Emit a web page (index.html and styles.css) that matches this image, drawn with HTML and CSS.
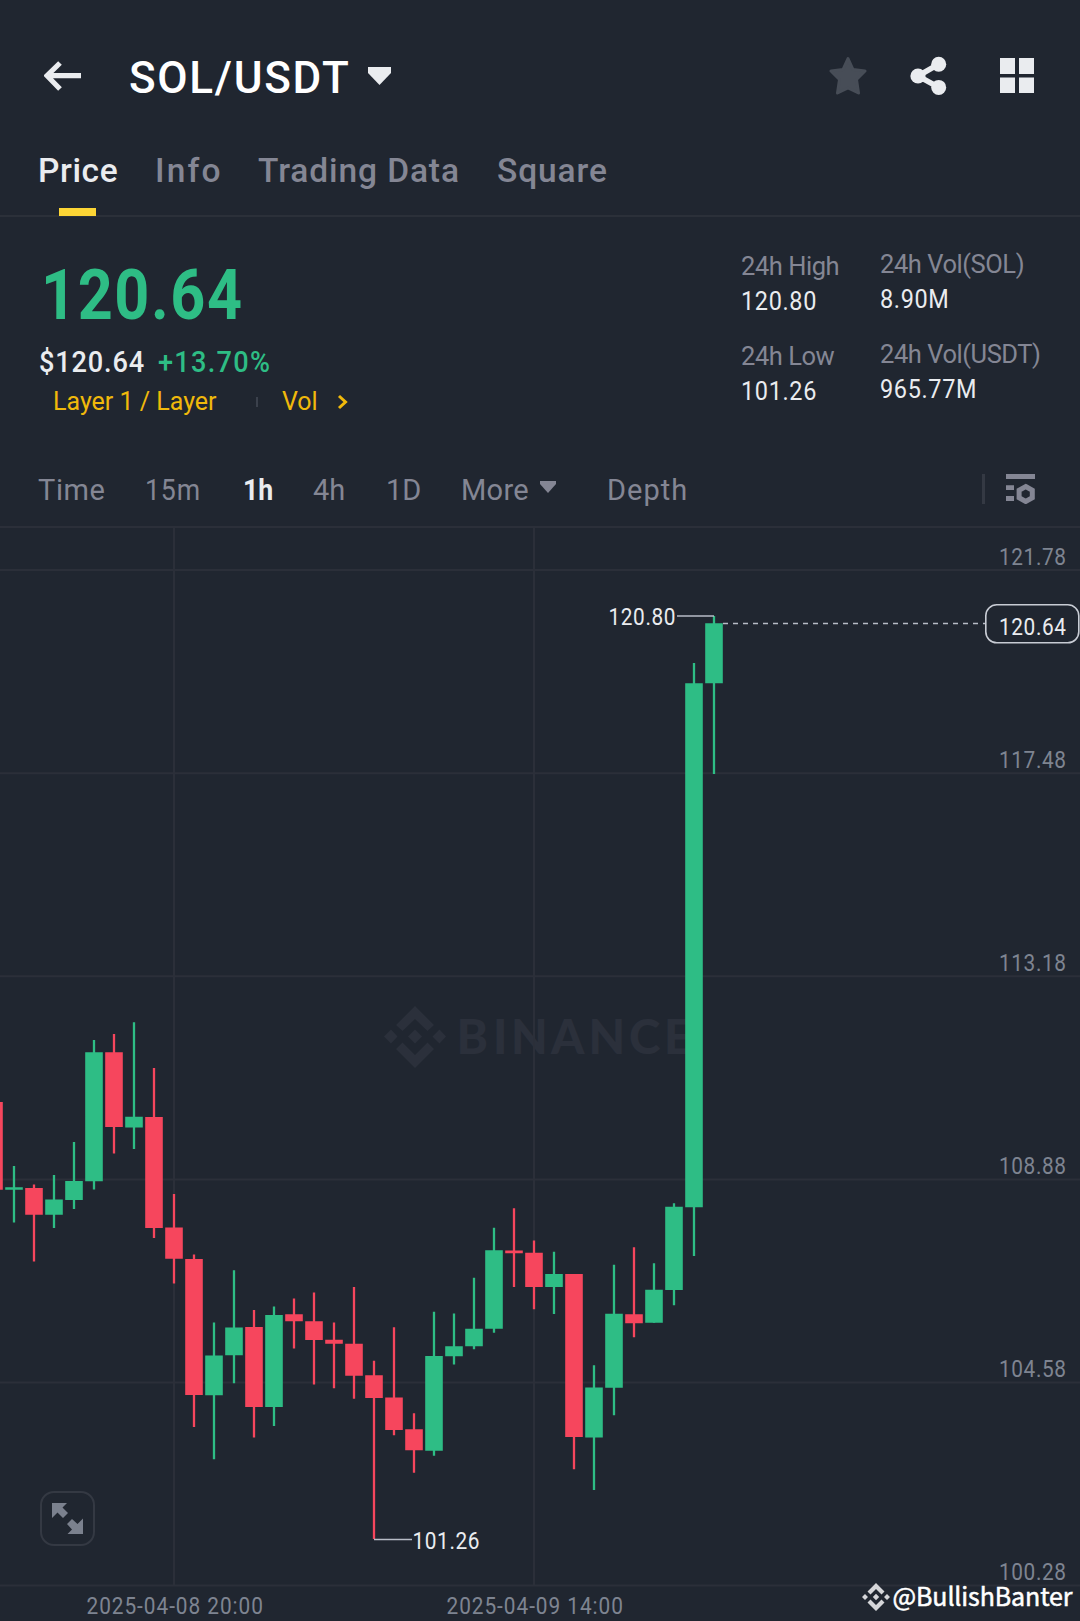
FILE: index.html
```html
<!DOCTYPE html>
<html lang="en">
<head>
<meta charset="utf-8">
<title>SOL/USDT</title>
<link rel="stylesheet" href="styles.css">
</head>
<body>
<header class="header">
  <svg class="back" width="37" height="30" viewBox="0 0 37 30"><path d="M37 14.7H6M16 2L3 14.7L16 28" fill="none" stroke="#eaecef" stroke-width="5.2"/></svg>
  <h1 class="title">SOL/USDT</h1>
  <svg class="caret" width="23" height="18" viewBox="0 0 23 18"><path d="M0 0H23V6L11.5 18L0 6Z" fill="#eaecef"/></svg>
  <div class="actions">
    <svg width="38" height="40" viewBox="0 0 38 40"><path d="M19 2.5L24 13.5L36 15L27.500 23.500L29.500 37L19 32L8.500 37L10.500 23.500L2 15L14 13.500Z" fill="#474d57" stroke="#474d57" stroke-width="3" stroke-linejoin="round"/></svg>
    <svg width="37" height="40" viewBox="0 0 37 40"><g fill="#eaecef"><circle cx="8" cy="20" r="7.600"/><circle cx="28.700" cy="8.200" r="7.500"/><circle cx="28.700" cy="31.400" r="7.500"/></g><path d="M28.700 8.200L8 20L28.700 31.400" fill="none" stroke="#eaecef" stroke-width="5.500"/></svg>
    <svg width="34" height="36" viewBox="0 0 34 36"><path d="M0 0H15V16H0ZM19 0H34V16H19ZM0 19.500H15V35H0ZM19 19.500H34V35H19Z" fill="#eaecef"/></svg>
  </div>
</header>

<nav class="tabs">
  <a class="tab active t-price">Price</a>
  <a class="tab t-info">Info</a>
  <a class="tab t-data">Trading Data</a>
  <a class="tab t-square">Square</a>
</nav>

<section class="summary">
  <div class="quote">
    <div class="last">120.64</div>
    <div class="change"><span class="fiat">$120.64</span><span class="up">+13.70%</span></div>
    <div class="tags"><span class="layer">Layer 1 / Layer</span><i class="tick"></i><span class="vol">Vol</span>
      <svg width="11" height="16" viewBox="0 0 11 16"><path d="M2 2L8.500 8L2 14" fill="none" stroke="#f0b90b" stroke-width="3"/></svg>
    </div>
  </div>
  <div class="stats">
    <div class="stat"><span class="label">24h High</span><span class="value">120.80</span></div>
    <div class="stat"><span class="label">24h Low</span><span class="value">101.26</span></div>
  </div>
  <div class="stats volumes">
    <div class="stat"><span class="label">24h Vol(SOL)</span><span class="value">8.90M</span></div>
    <div class="stat"><span class="label">24h Vol(USDT)</span><span class="value">965.77M</span></div>
  </div>
</section>

<nav class="intervals">
  <a class="i-time">Time</a>
  <a class="i-15m">15m</a>
  <a class="i-1h active">1h</a>
  <a class="i-4h">4h</a>
  <a class="i-1d">1D</a>
  <a class="i-more">More</a>
  <svg class="more-caret" width="16" height="12" viewBox="0 0 16 12"><path d="M0 0H16V3L8 12L0 3Z" fill="#848694"/></svg>
  <a class="i-depth">Depth</a>
  <span class="settings">
    <svg width="30" height="30" viewBox="0 0 30 30"><path d="M0 0H29V5H0ZM0 11.300H8V16H0ZM0 22H8V27H0Z" fill="#848694"/><path d="M19.700 12.500L26.300 16.200V23.800L19.700 27.500L13.100 23.800V16.200Z" fill="none" stroke="#848694" stroke-width="5"/></svg>
  </span>
</nav>

<main class="chart">
<svg width="1080" height="1093" viewBox="0 528 1080 1093">
  <g class="brand">
    <path d="M415 1006L434 1025L427.500 1031L415 1019L402.500 1031L396 1025ZM415 1068L434 1049L427.500 1042.500L415 1055L402.500 1042.500L396 1049ZM415 1029.500L422 1036.500L415 1043.500L408 1036.500ZM391 1029.500L397.500 1036.500L391 1043.500L384 1036.500ZM439.500 1029.500L446 1036.500L439.500 1043.500L432.500 1036.500Z"/>
    <text x="456.500 493 511 551 588.500 629 664" y="1053.500">BINANCE</text>
  </g>
  <path class="grid" d="M0 570H1080M0 773.200H1080M0 976.300H1080M0 1179.400H1080M0 1382.500H1080M0 1585.600H1080M174 528V1585M534 528V1585"/>

  <path class="wick green" d="M14 1166V1222.500M54 1175V1228M74 1142V1209M94 1040V1189.500M134 1022.300V1149M214 1322.500V1459.300M234 1270.300V1383.300M274 1306.500V1426M434 1311.700V1455.700M454 1313.500V1364.500M474 1277.700V1349.300M494 1227.700V1332.700M554 1251.700V1314M594 1365.300V1490M614 1264.700V1415.300M654 1263.300V1322.800M674 1203.300V1305.300M694 663V1256M714 616V774"/>
  <path class="body green" d="M14 1187.300V1189.700M54 1199.500V1214.700M74 1181V1200M94 1052.300V1181.300M134 1116.700V1127.500M214 1355.500V1395.300M234 1327.500V1355.300M274 1315V1407M434 1356V1450.700M454 1346.300V1356.300M474 1328.700V1346.300M494 1250.300V1328.700M554 1274V1287M594 1387.500V1437.500M614 1313.700V1387.700M654 1289.700V1322.800M674 1206.700V1290M694 683.300V1207.300M714 623.300V683.300"/>
  <path class="wick red" d="M34 1184.500V1261.500M114 1034V1153.500M154 1068V1238M174 1194V1283.500M194 1254.500V1427M254 1310V1437.500M294 1298.500V1348.500M314 1292.500V1384.500M334 1322.500V1388.300M354 1287V1398.700M374 1360.700V1539M394 1327.300V1435.300M414 1413.300V1472.700M514 1208.300V1287M534 1240.500V1309.300M574 1274V1469.300M634 1247.300V1337.300"/>
  <path class="body red" d="M-6 1102V1189.700M34 1188V1214.700M114 1052.300V1127M154 1117V1228M174 1227.500V1258.700M194 1259V1395M254 1327V1407M294 1314.300V1321.300M314 1321.300V1340M334 1339.700V1343.700M354 1343.700V1375.700M374 1375.300V1398M394 1397.500V1430M414 1429.300V1450.300M514 1250.500V1253.200M534 1252.700V1287M574 1274V1437M634 1314.300V1323.300"/>

  <path class="leader" d="M677 616H714M374 1539.500H412"/>
  <path class="leader" d="M723 623.500H985" stroke-dasharray="5 5"/>
  <rect x="985.800" y="604.800" width="93" height="38" rx="11" fill="#202630" stroke="#c8ccd4" stroke-width="1.600"/>

  <g class="bright">
    <text x="608.500" y="625" textLength="74">120.80</text>
    <text x="412.500" y="1548.700" textLength="74">101.26</text>
    <text x="999" y="635" textLength="74">120.64</text>
  </g>
  <g class="axis">
    <text x="999" y="564.700" textLength="74">121.78</text>
    <text x="999" y="768" textLength="74">117.48</text>
    <text x="999" y="971.500" textLength="74">113.18</text>
    <text x="999" y="1174.500" textLength="74">108.88</text>
    <text x="999" y="1377.500" textLength="74">104.58</text>
    <text x="999" y="1580.500" textLength="74">100.28</text>
    <text x="86.500" y="1613.700" textLength="195">2025-04-08 20:00</text>
    <text x="446.500" y="1613.700" textLength="195">2025-04-09 14:00</text>
  </g>

  <g class="expand">
    <rect x="41" y="1492" width="53" height="53" rx="13" fill="none" stroke="#343943" stroke-width="2"/>
    <path d="M52 1503H67L62.500 1507.500L68 1513L63 1518L57.500 1512.500L52 1518ZM83 1534H67.500L72 1529.500L67 1524L72 1519L77.500 1524L83 1518.500Z" fill="#7b818e"/>
  </g>

  <g class="credit">
    <path d="M876 1583L884.500 1591.500L881.500 1594.500L876 1589L870.500 1594.500L867.500 1591.500ZM876 1611L884.500 1602.500L881.500 1599.500L876 1605L870.500 1599.500L867.500 1602.500ZM876 1593.800L879.200 1597L876 1600.200L872.800 1597ZM865 1594L868 1597L865 1600L862 1597ZM887 1594L890 1597L887 1600L884 1597Z" fill="#d5d6d9"/>
    <text x="892.500" y="1605.500" textLength="180">@BullishBanter</text>
  </g>
</svg>
</main>
</body>
</html>
```
FILE: styles.css
```css
* { box-sizing: border-box; }
body {
  margin: 0;
  width: 1080px;
  background: #202630;
  color: #848694;
  font-family: Roboto, "Liberation Sans", sans-serif;
}
svg { display: block; flex: none; }

.header {
  display: flex;
  align-items: center;
  height: 152px;
  padding: 0 46px 0 44px;
}
.title {
  margin: 4px 0 0 48px;
  width: 221px;
  font-size: 44px;
  font-weight: 500;
  line-height: 50px;
  letter-spacing: 1.7px;
  color: #fff;
}
.caret { margin-left: 18px; margin-bottom: 1px; }
.actions {
  display: flex;
  align-items: center;
  margin-left: auto;
}
.actions svg + svg { margin-left: 43px; }
.actions svg:last-child { margin-left: 53px; }

.tabs {
  display: flex;
  height: 65px;
  padding-left: 38px;
  border-bottom: 2px solid #2b3039;
}
.tab {
  font-size: 33.5px;
  font-weight: 500;
  line-height: 38px;
  letter-spacing: 0.9px;
  white-space: nowrap;
}
.t-price { width: 117px; letter-spacing: 0.6px; }
.t-info { width: 103px; letter-spacing: 2.2px; }
.t-data { width: 239px; }
.tab.active { position: relative; color: #eaecef; }
.tab.active::after {
  content: "";
  position: absolute;
  left: 21px;
  bottom: -1px;
  width: 37px;
  height: 8px;
  background: #fcd535;
}

.summary {
  display: flex;
  height: 223px;
}
.quote { width: 741px; padding: 43px 0 0 39px; }
.last {
  margin-left: 2px;
  font-size: 69.5px;
  font-weight: 700;
  line-height: 71px;
  letter-spacing: 1.8px;
  color: #2ebd85;
  transform: scaleX(0.88);
  transform-origin: left;
}
.change {
  display: flex;
  margin-top: 13px;
  font-size: 29.5px;
  font-weight: 500;
  line-height: 36px;
}
/* Narrow digits with open spacing */
.fiat, .up, .value, .i-1h, .i-15m {
  transform: scaleX(0.92);
  transform-origin: left;
}
.fiat { width: 119px; letter-spacing: 0.9px; color: #eaecef; }
.up { letter-spacing: 1.4px; color: #2ebd85; }
.tags {
  display: flex;
  align-items: center;
  margin-top: 5px;
  padding-left: 14px;
  font-size: 25px;
  line-height: 34px;
  color: #f0b90b;
}
.layer { width: 203px; }
.tick { width: 2px; height: 10px; background: #3b414c; }
.vol { width: 55px; margin-left: 24px; }

.stats {
  display: flex;
  flex-direction: column;
  gap: 20px;
  width: 139px;
  padding-top: 32px;
}
.volumes { width: auto; padding-top: 30px; }
.stat {
  display: flex;
  flex-direction: column;
  font-size: 25.5px;
  line-height: 35px;
  white-space: nowrap;
}
.label { letter-spacing: -0.45px; }
.value { letter-spacing: 0.7px; color: #eaecef; }

.intervals {
  display: flex;
  align-items: center;
  height: 88px;
  padding: 12px 44px 0 38px;
  border-bottom: 2px solid #2b2f39;
  font-size: 29px;
  line-height: 50px;
}
.intervals a { padding-top: 2px; }
.intervals .active { font-weight: 700; color: #eaecef; }
.i-time { width: 107px; letter-spacing: 0.6px; }
.i-15m { width: 98px; letter-spacing: 0.9px; }
.i-1h { width: 70px; }
.i-4h { width: 73px; }
.i-1d { width: 75px; }
.i-more { width: 79px; letter-spacing: 0.3px; }
.more-caret { margin-bottom: 4px; }
.i-depth { margin-left: 51px; letter-spacing: 1px; }
.settings {
  display: flex;
  margin-left: auto;
  padding-left: 21px;
  border-left: 3px solid #343943;
}

.chart text { font-size: 23px; }
.chart .axis text, .chart .bright text {
  transform: scaleX(0.905);
  transform-box: fill-box;
  transform-origin: left;
}
.brand { fill: #2b303b; }
.chart .brand text { font-family: Lato, sans-serif; font-size: 47.5px; font-weight: 900; }
.grid { fill: none; stroke: #2b2f39; stroke-width: 2; }
.wick { stroke-width: 2.3; }
.body { stroke-width: 17.6; }
.green { stroke: #2ebd85; }
.red { stroke: #f6465d; }
.leader { stroke: #b7bcc6; stroke-width: 1.7; }
.bright { fill: #eaecef; }
.axis { fill: #7e8491; }
.chart .credit text {
  fill: #fff;
  stroke: #fff;
  stroke-width: 0.5px;
  font-family: "Noto Sans CJK SC", sans-serif;
  font-size: 25px;
  font-weight: 400;
}
```
